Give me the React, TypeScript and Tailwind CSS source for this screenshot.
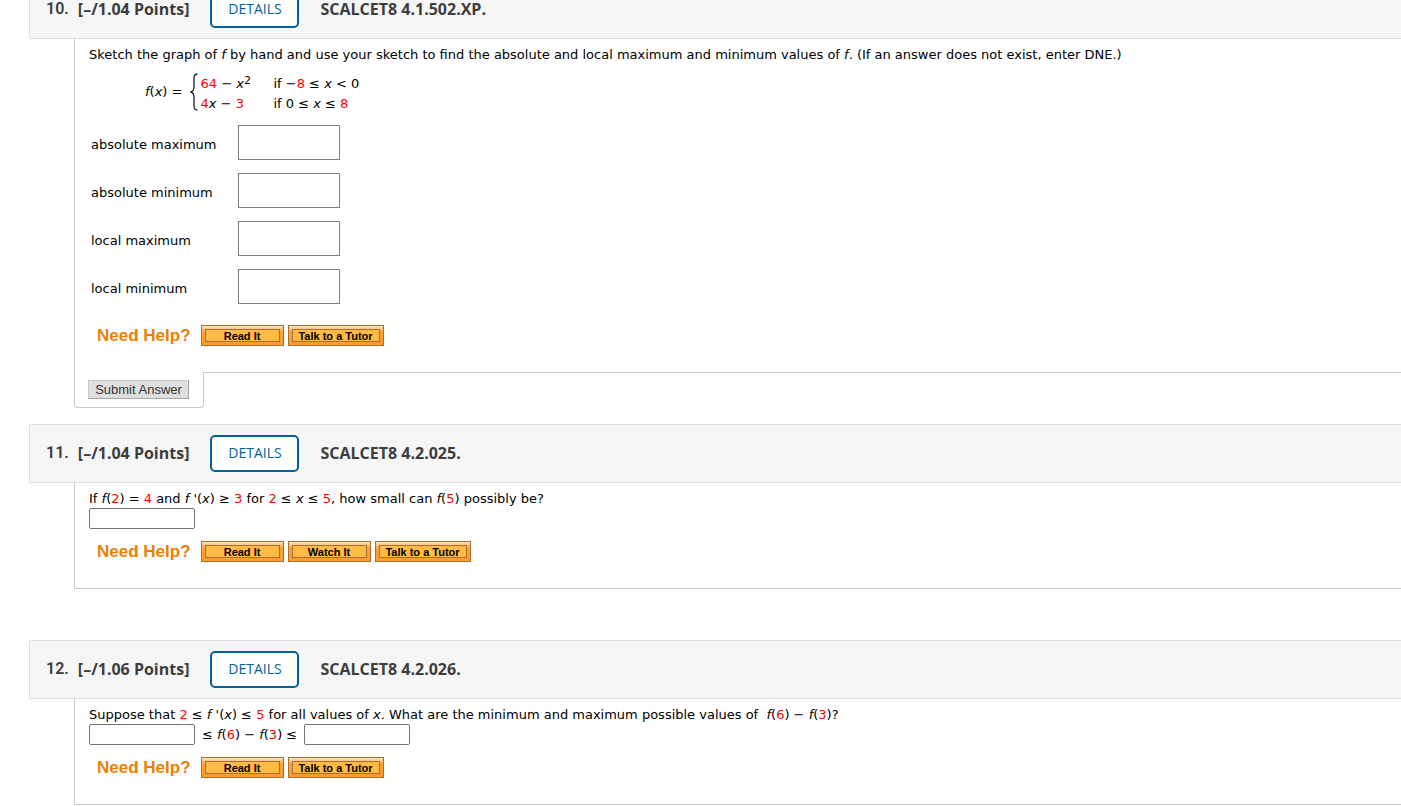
import { useState, type ReactNode } from 'react';

const HELP_WIDTHS: Record<string, string> = {
  'Read It': 'w-[83px]',
  'Watch It': 'w-[83px]',
  'Talk to a Tutor': 'w-24',
};

function Num({ children }: { children: ReactNode }) {
  return <span className="text-[#ff0000]">{children}</span>;
}

function QuestionHeader({ number, points, code }: { number: number; points: string; code: string }) {
  return (
    <div className="flex h-[59px] items-center rounded-l-xs border border-r-0 border-[#dddddd] bg-[#f6f6f6] pl-4 font-['Open_Sans',sans-serif] text-base text-[#3d3d3d]">
      <span className="mr-[9px] pb-px font-['Roboto',sans-serif] font-semibold">{number}.</span>
      <h2 className="pb-px font-bold">[–/{points} Points]</h2>
      <button
        type="button"
        className="mx-[21px] h-[37px] w-[89px] rounded-[5px] border-2 border-[#006298] bg-white pb-px text-sm font-medium text-[#006298]"
      >
        DETAILS
      </button>
      <span className="pb-px font-bold">{code}</span>
    </div>
  );
}

function NeedHelp({ options }: { options: string[] }) {
  return (
    <div className="flex h-[21px] items-center gap-1 pl-2">
      <span className="mr-1.5 font-['Liberation_Sans',sans-serif] text-[17px] font-bold text-[#ec8000]">
        Need Help?
      </span>
      {options.map((option) => (
        <button
          key={option}
          type="button"
          className={`h-[21px] border border-[#a8702f] bg-linear-to-b from-[#ffe6c4] via-[#ffa03a] via-30% to-[#ff9a30] p-[3px] ${HELP_WIDTHS[option]}`}
        >
          <span className="flex h-[13px] items-center justify-center border border-[#a8702f] bg-[#ffbb43] pt-px font-['Liberation_Sans',sans-serif] text-[11px] font-bold whitespace-nowrap text-black">
            {option}
          </span>
        </button>
      ))}
    </div>
  );
}

function AnswerInput({ label }: { label: string }) {
  const [value, setValue] = useState('');
  return (
    <input
      type="text"
      aria-label={label}
      value={value}
      onChange={(e) => setValue(e.target.value)}
      className="h-[21px] w-[106px] rounded-xs border border-[#767676] bg-white px-1"
    />
  );
}

function Piecewise() {
  return (
    <div className="mt-2 ml-14 flex h-[38px] items-center whitespace-nowrap">
      <span>
        <i>f</i>(<i>x</i>) =
      </span>
      <svg className="mr-0.5 ml-2 h-[38px] w-2" viewBox="0 0 8 38" fill="none" stroke="#222" strokeWidth="1.3">
        <path d="M7.5 1C4.5 1 4 2.5 4 5v9c0 3-1 4.5-3.500 5C3 19.500 4 21 4 24v9c0 2.500.5 4 3.500 4" />
      </svg>
      <div className="grid grid-cols-[73px_auto] pt-1 leading-5">
        <span>
          <Num>64</Num> − <i>x</i>
          <sup className="-top-1 text-[11px]">2</sup>
        </span>
        <span>
          if −<Num>8</Num> ≤ <i>x</i> &lt; 0
        </span>
        <span>
          <Num>4</Num>
          <i>x</i> − <Num>3</Num>
        </span>
        <span>
          if 0 ≤ <i>x</i> ≤ <Num>8</Num>
        </span>
      </div>
    </div>
  );
}

const EXTREMA = ['absolute maximum', 'absolute minimum', 'local maximum', 'local minimum'];

export default function App() {
  const [answers, setAnswers] = useState<Record<string, string>>({});

  return (
    <main className="overflow-hidden bg-white pl-[29px] font-['Verdana','DejaVu_Sans',sans-serif] text-[13px] leading-5 text-black">
      <section className="-mt-5">
        <QuestionHeader number={10} points="1.04" code="SCALCET8 4.1.502.XP." />
        <div className="ml-[45px]">
          <div className="border-l border-[#c8c8c8] pt-1.5 pb-[26px] pl-3.5">
            <p>
              Sketch the graph of <i>f</i> by hand and use your sketch to find the absolute and local maximum and
              minimum values of <i>f</i>. (If an answer does not exist, enter DNE.)
            </p>
            <Piecewise />
            <div className="mt-3.5 mb-[21px] flex flex-col gap-[13px] pl-0.5">
              {EXTREMA.map((name) => (
                <label key={name} className="flex h-[35px] items-center">
                  <span className="w-[147px] pt-1">{name}</span>
                  <input
                    type="text"
                    value={answers[name] ?? ''}
                    onChange={(e) => setAnswers({ ...answers, [name]: e.target.value })}
                    className="h-[35px] w-[102px] border border-[#808080] bg-white px-2"
                  />
                </label>
              ))}
            </div>
            <NeedHelp options={['Read It', 'Talk to a Tutor']} />
          </div>
          <div className="flex">
            <div className="h-9 w-[130px] rounded-b border border-t-0 border-[#c8c8c8] pt-2 pl-[13px]">
              <button
                type="button"
                className="block h-[19px] w-[101px] border border-t-[#c8c8c8] border-r-[#a5a5a5] border-b-[#a5a5a5] border-l-[#c8c8c8] bg-[#dfdfdf] font-['Liberation_Sans',sans-serif] text-[13px] leading-[17px] whitespace-nowrap text-[#333333]"
              >
                Submit Answer
              </button>
            </div>
            <div className="flex-1 border-t border-[#c8c8c8]" />
          </div>
        </div>
      </section>

      <section className="mt-4">
        <QuestionHeader number={11} points="1.04" code="SCALCET8 4.2.025." />
        <div className="ml-[45px] border-b border-l border-[#c8c8c8] pt-1.5 pb-[26px] pl-3.5">
          <p className="h-[19px]">
            If <i>f</i>(<Num>2</Num>) = <Num>4</Num> and <i>f</i> '(<i>x</i>) ≥ <Num>3</Num> for <Num>2</Num> ≤{' '}
            <i>x</i> ≤ <Num>5</Num>, how small can <i>f</i>(<Num>5</Num>) possibly be?
          </p>
          <div className="mb-3 flex">
            <AnswerInput label="Smallest value of f(5)" />
          </div>
          <NeedHelp options={['Read It', 'Watch It', 'Talk to a Tutor']} />
        </div>
      </section>

      <section className="mt-[51px]">
        <QuestionHeader number={12} points="1.06" code="SCALCET8 4.2.026." />
        <div className="ml-[45px] border-b border-l border-[#c8c8c8] pt-1.5 pb-[26px] pl-3.5">
          <p className="h-[19px]">
            Suppose that <Num>2</Num> ≤ <i>f</i> '(<i>x</i>) ≤ <Num>5</Num> for all values of <i>x</i>. What are the
            minimum and maximum possible values of&nbsp; <i>f</i>(<Num>6</Num>) − <i>f</i>(<Num>3</Num>)?
          </p>
          <div className="mb-3 flex items-center gap-[7px]">
            <AnswerInput label="Minimum of f(6) − f(3)" />
            <span>
              ≤ <i>f</i>(<Num>6</Num>) − <i>f</i>(<Num>3</Num>) ≤
            </span>
            <AnswerInput label="Maximum of f(6) − f(3)" />
          </div>
          <NeedHelp options={['Read It', 'Talk to a Tutor']} />
        </div>
      </section>
    </main>
  );
}
